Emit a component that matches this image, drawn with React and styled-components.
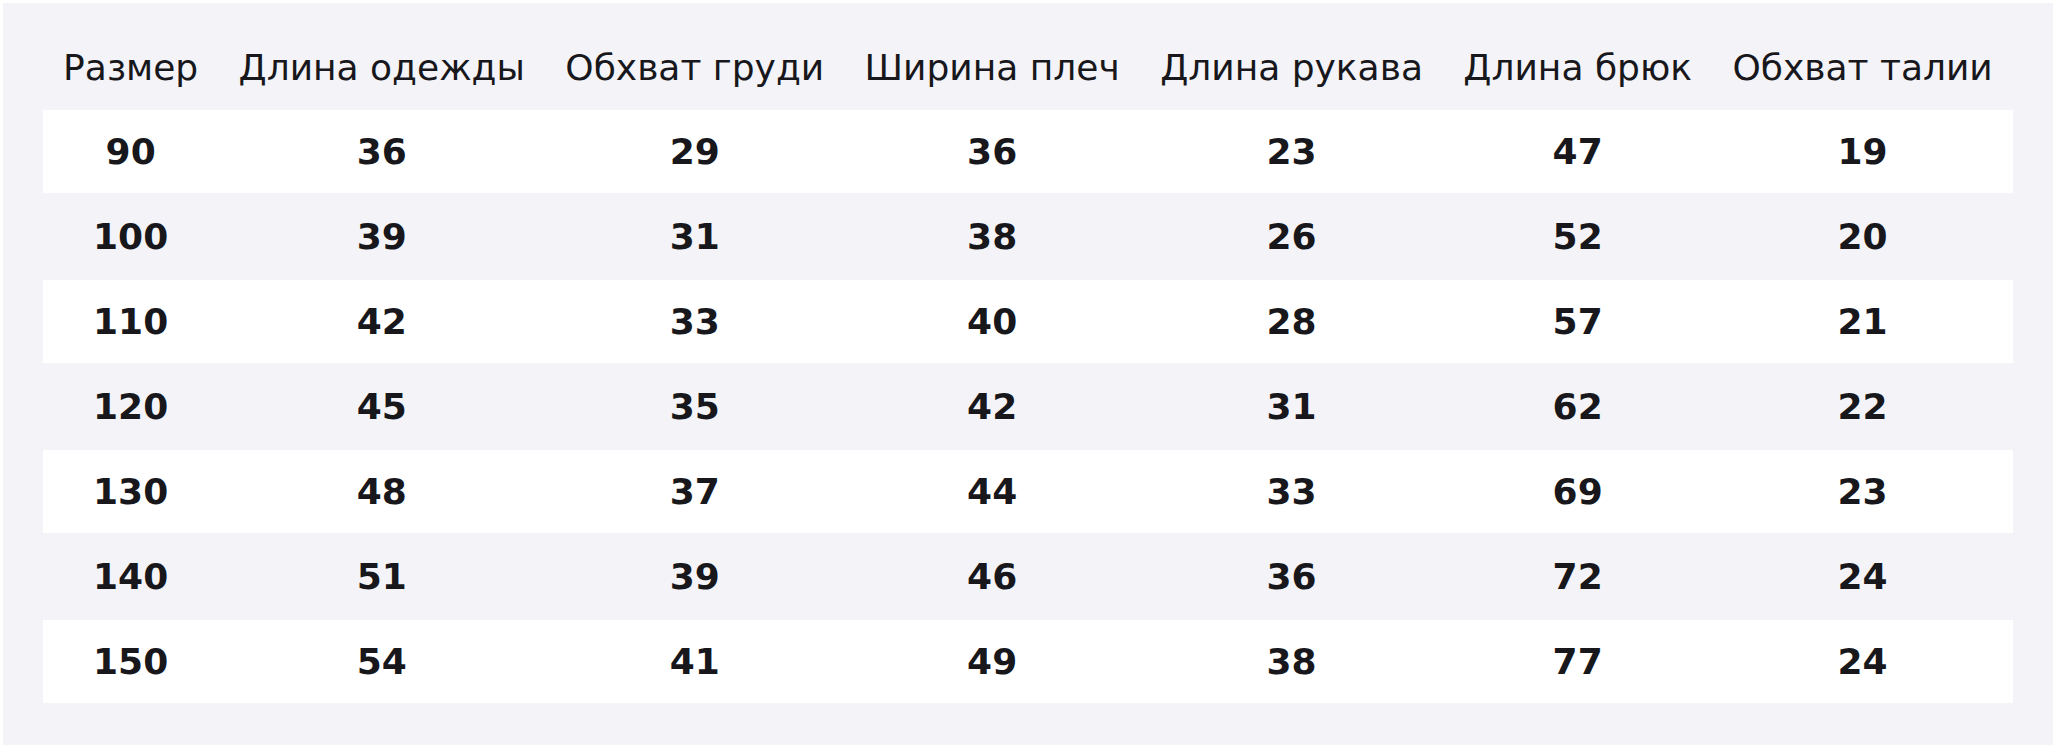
import styled, { createGlobalStyle } from "styled-components";

const GlobalStyle = createGlobalStyle`
    html, body {
        margin:0;
        padding:0;
        background:#ffffff;
    }
    body {
        padding:3px;
        font-family:"DejaVu Sans", "Liberation Sans", sans-serif;
        color:#17171c;
    }
`

const Panel = styled.div`
    width:2050px;
    height:742px;
    box-sizing:border-box;
    padding:40px;
    background-color:#f4f4f8;
`

const SizeTable = styled.table`
    width:100%;
    border-collapse:separate;
    border-spacing:0 2px;
`

const HeadCell = styled.th`
    font-weight:normal;
    font-size:36px;
    line-height:42px;
    padding:2px 20px 19px;
    text-align:center;
    white-space:nowrap;
`

const Row = styled.tr`
    background-color:${props => props.$striped ? '#ffffff' : 'transparent'};
`

const Cell = styled.td`
    font-weight:bold;
    font-size:36px;
    line-height:42px;
    height:83px;
    box-sizing:border-box;
    padding:0 20px;
    text-align:center;
    vertical-align:middle;
`

const columns = ['Размер', 'Длина одежды', 'Обхват груди', 'Ширина плеч', 'Длина рукава', 'Длина брюк', 'Обхват талии']

const rows = [
    [90, 36, 29, 36, 23, 47, 19],
    [100, 39, 31, 38, 26, 52, 20],
    [110, 42, 33, 40, 28, 57, 21],
    [120, 45, 35, 42, 31, 62, 22],
    [130, 48, 37, 44, 33, 69, 23],
    [140, 51, 39, 46, 36, 72, 24],
    [150, 54, 41, 49, 38, 77, 24],
]

function App(){
    return(
        <>
            <GlobalStyle />
            <Panel>
                <SizeTable>
                    <thead>
                        <tr>
                            {columns.map(c => <HeadCell key={c}>{c}</HeadCell>)}
                        </tr>
                    </thead>
                    <tbody>
                        {rows.map((r, i) => (
                            <Row key={r[0]} $striped={i % 2 === 0}>
                                {r.map((v, j) => <Cell key={j}>{v}</Cell>)}
                            </Row>
                        ))}
                    </tbody>
                </SizeTable>
            </Panel>
        </>
    )
}

export default App
